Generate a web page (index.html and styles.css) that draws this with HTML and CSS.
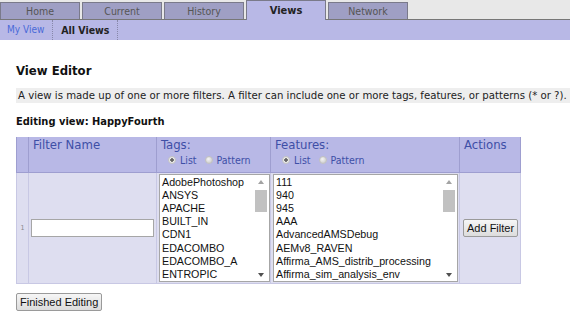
FILE: index.html
```html
<!DOCTYPE html>
<html lang="en">
<head>
    <meta charset="UTF-8">
    <title>View Editor</title>
    <link rel="stylesheet" href="styles.css">
</head>
<body>
    <div class="tabs">
        <a href="#" class="tab">Home</a>
        <a href="#" class="tab">Current</a>
        <a href="#" class="tab">History</a>
        <a href="#" class="tab active">Views</a>
        <a href="#" class="tab">Network</a>
    </div>
    <div class="subnav">
        <a href="#" class="sub link">My View</a>
        <span class="sub current">All Views</span>
    </div>

    <div class="content">
        <h2>View Editor</h2>
        <p class="note">A view is made up of one or more filters. A filter can include one or more tags, features, or patterns (* or ?).</p>
        <h4>Editing view: HappyFourth</h4>

        <table class="filters">
            <tr>
                <th class="num"></th>
                <th class="name">Filter Name</th>
                <th class="tags">Tags:
                    <div class="mode"><span class="radio on"></span>List <span class="radio"></span>Pattern</div>
                </th>
                <th class="feats">Features:
                    <div class="mode"><span class="radio on"></span>List <span class="radio"></span>Pattern</div>
                </th>
                <th class="acts">Actions</th>
            </tr>
            <tr>
                <td class="num">1</td>
                <td class="name"><input type="text" class="field"></td>
                <td class="tags">
                    <div class="listbox">
                        <div class="items">
                            <div>AdobePhotoshop</div>
                            <div>ANSYS</div>
                            <div>APACHE</div>
                            <div>BUILT_IN</div>
                            <div>CDN1</div>
                            <div>EDACOMBO</div>
                            <div>EDACOMBO_A</div>
                            <div>ENTROPIC</div>
                        </div>
                        <div class="scroll">
                            <span class="up"></span>
                            <span class="thumb"></span>
                            <span class="down"></span>
                        </div>
                    </div>
                </td>
                <td class="feats">
                    <div class="listbox wide">
                        <div class="items">
                            <div>111</div>
                            <div>940</div>
                            <div>945</div>
                            <div>AAA</div>
                            <div>AdvancedAMSDebug</div>
                            <div>AEMv8_RAVEN</div>
                            <div>Affirma_AMS_distrib_processing</div>
                            <div>Affirma_sim_analysis_env</div>
                        </div>
                        <div class="scroll">
                            <span class="up"></span>
                            <span class="thumb"></span>
                            <span class="down"></span>
                        </div>
                    </div>
                </td>
                <td class="acts"><button class="btn">Add Filter</button></td>
            </tr>
        </table>

        <button class="btn finish">Finished Editing</button>
    </div>
</body>
</html>
```

FILE: styles.css
```css
* {
    margin: 0;
    padding: 0;
    box-sizing: border-box;
}

body {
    background: #fff;
    font-family: 'DejaVu Sans Condensed', 'DejaVu Sans', sans-serif;
    color: #222;
}

/* top tabs */
.tabs {
    display: flex;
    gap: 2px;
    height: 20px;
    background: #e8e8e8;
    border-bottom: 1px solid #777;
}

.tab {
    width: 80px;
    margin-top: 2px;
    background: #9f9fc4;
    border: 1px solid #7a7a8a;
    border-bottom: none;
    color: #555;
    font-size: 10.5px;
    text-align: center;
    line-height: 16px;
    text-decoration: none;
}

.tab.active {
    margin-top: 0;
    height: 20px;
    background: #b8b8e6;
    color: #222;
    font-weight: bold;
    font-size: 11px;
    line-height: 19px;
}

.subnav {
    display: flex;
    height: 20px;
    background: #b8b8e6;
}

.sub {
    font-size: 10px;
    line-height: 20px;
    padding: 0 8px 0 7px;
    border-right: 1px dotted #8888aa;
    text-decoration: none;
}

.sub.link {
    color: #4a6ad8;
}

.sub.current {
    color: #222;
    font-weight: bold;
    font-size: 10.5px;
    padding-left: 8px;
}

/* page body */
.content {
    padding: 23px 0 0 16px;
}

h2 {
    font-size: 13px;
    font-weight: bold;
    color: #111;
}

.note {
    margin-top: 10px;
    background: #eeeeee;
    font-size: 11.3px;
    line-height: 15px;
    padding-left: 2px;
    color: #222;
    white-space: nowrap;
}

h4 {
    margin-top: 12px;
    font-size: 11px;
    font-weight: bold;
    color: #111;
}

.filters {
    margin-top: 9px;
    width: 504px;
    table-layout: fixed;
    border-collapse: collapse;
    font-size: 13px;
}

.filters th {
    background: #b8b8e6;
    color: #3e4fa6;
    font-weight: normal;
    text-align: left;
    vertical-align: top;
    height: 35px;
    padding: 0 4px;
    border: 1px solid #9e9ed0;
    border-top: none;
}

.filters td {
    background: #dedef0;
    border: 1px solid #c8c8e4;
    border-top: 1px solid #9e9ed0;
    height: 111px;
    padding: 0 2px;
}

.filters .num {
    width: 12px;
    padding: 0;
    font-size: 7px;
    color: #888;
    text-align: center;
}

.filters .name { width: 128px; }
.filters .tags { width: 114px; }
.filters .feats { width: 189px; }
.filters .acts { width: 61px; }

.mode {
    display: flex;
    align-items: center;
    gap: 4px;
    margin-top: 2px;
    padding-left: 7px;
    font-size: 10.5px;
    line-height: 12px;
}

.radio {
    width: 8px;
    height: 8px;
    border-radius: 50%;
    background: radial-gradient(circle at 40% 35%, #f4f4f4, #c4c4c4);
    border: 1px solid #c0c0c0;
    margin-left: 4px;
}

.radio.on {
    background: radial-gradient(circle, #666 0 1.5px, #ececec 2px);
    margin-left: 0;
}

.field {
    display: block;
    width: 123px;
    height: 18px;
    border: 1px solid #a6a6a6;
    background: #fff;
}

.listbox {
    display: flex;
    width: 111px;
    height: 108px;
    background: #fff;
    border: 1px solid #a6a6a6;
    font-family: 'Liberation Sans', Arial, sans-serif;
    font-size: 10.7px;
    color: #111;
}

.listbox.wide {
    width: 185px;
}

.items {
    flex: 1;
    padding: 1px 0 0 2px;
    line-height: 13.2px;
    white-space: nowrap;
    overflow: hidden;
}

.scroll {
    width: 16px;
    display: flex;
    flex-direction: column;
    align-items: center;
    background: #fff;
    padding: 5px 0 4px;
}

.up,
.down {
    width: 0;
    height: 0;
    border-left: 3.5px solid transparent;
    border-right: 3.5px solid transparent;
}

.up {
    border-bottom: 4px solid #a3a3a3;
}

.down {
    margin-top: auto;
    border-top: 4px solid #505050;
}

.thumb {
    width: 12px;
    height: 22px;
    margin-top: 6px;
    background: #c1c1c1;
}

.btn {
    font-family: 'Liberation Sans', Arial, sans-serif;
    font-size: 11px;
    color: #111;
    padding: 2px 3px;
    white-space: nowrap;
    background: linear-gradient(#f6f6f6, #dcdcdc);
    border: 1px solid #9a9a9a;
    border-radius: 2px;
}

.filters .acts .btn {
    margin-left: 1px;
}

.finish {
    margin-top: 9px;
}
```
